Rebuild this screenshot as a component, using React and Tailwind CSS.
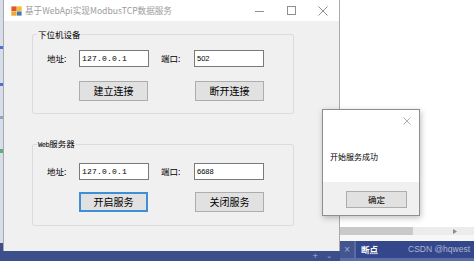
const cjk = "font-['Noto_Sans_CJK_SC','Microsoft_YaHei',sans-serif]"

function FormIcon() {
  return (
    <svg width="11" height="10" viewBox="0 0 11 10">
      <rect x="0" y="0" width="11" height="10" fill="#f3e3c0" />
      <rect x="0.5" y="0.5" width="5" height="4.5" fill="#e0562a" />
      <rect x="6" y="0.5" width="4.5" height="4.5" fill="#f5c02d" />
      <rect x="0.5" y="5.5" width="5" height="4" fill="#f0a830" />
      <rect x="6" y="5.5" width="4.5" height="4" fill="#3b78c8" />
    </svg>
  )
}

function TitleBar() {
  return (
    <div className="h-[21px] bg-white flex items-center shrink-0">
      <div className="pl-[7px] flex items-center">
        <FormIcon />
      </div>
      <span className={`ml-[3px] text-[8.6px] leading-none text-[#9c9c9c] ${cjk}`}>
        基于WebApi实现ModbusTCP数据服务
      </span>
      <div className="ml-auto flex h-full">
        <div className="w-[32px] flex items-center justify-center">
          <svg width="9" height="9" viewBox="0 0 9 9">
            <line x1="0" y1="5.5" x2="9" y2="5.5" stroke="#8f8f8f" strokeWidth="1" />
          </svg>
        </div>
        <div className="w-[32px] flex items-center justify-center">
          <svg width="9" height="9" viewBox="0 0 9 9">
            <rect x="0.5" y="0.5" width="8" height="8" fill="none" stroke="#8f8f8f" strokeWidth="1" />
          </svg>
        </div>
        <div className="w-[32px] flex items-center justify-center">
          <svg width="10" height="10" viewBox="0 0 10 10">
            <path d="M0.5 0.5L9.5 9.5M9.5 0.5L0.5 9.5" stroke="#8f8f8f" strokeWidth="1" />
          </svg>
        </div>
      </div>
    </div>
  )
}

function TextBox({ value, mono }) {
  return (
    <div className="w-[70px] h-[17px] bg-white border border-[#7a7a7a] flex items-center pl-[2px]">
      <span
        className={
          mono
            ? "text-[8px] leading-none text-black font-['Liberation_Mono',monospace] tracking-[0.2px]"
            : "text-[7.5px] leading-none text-black font-['Liberation_Sans',sans-serif]"
        }
      >
        {value}
      </span>
    </div>
  )
}

function WinButton({ children, focused }) {
  return (
    <div
      className={`w-[69px] h-[20px] flex items-center justify-center bg-[#e1e1e1] text-[10px] leading-none text-black ${cjk} ${
        focused ? 'border-2 border-[#3f8fd6]' : 'border border-[#adadad]'
      }`}
    >
      {children}
    </div>
  )
}

function GroupBox({ title, address, port, left, right, focusLeft, top, rowGap, pb, mono }) {
  return (
    <fieldset className={`w-[262px] border border-[#dcdcdc] rounded-[2px] ${pb}`}>
      <legend className={`ml-[4px] px-[1px] text-[8.5px] leading-[10px] text-black ${cjk}`}>{title}</legend>
      <div className={`flex items-center pl-[14px] ${top}`}>
        <span className={`w-[32px] text-[8.5px] leading-none text-black ${cjk}`}>地址:</span>
        <TextBox value={address} mono />
        <span className={`ml-[12px] w-[33px] text-[8.5px] leading-none text-black ${cjk}`}>端口:</span>
        <TextBox value={port} mono={mono} />
      </div>
      <div className={`flex ml-[46px] ${rowGap}`}>
        <WinButton focused={focusLeft}>{left}</WinButton>
        <div className="ml-[47px]">
          <WinButton>{right}</WinButton>
        </div>
      </div>
    </fieldset>
  )
}

function MainWindow() {
  return (
    <div className="w-[337px] h-[251px] bg-[#f0f0f0] border-l border-r border-[#a9a9a9] flex flex-col">
      <TitleBar />
      <div className="flex flex-col pl-[28px] pt-[8px]">
        <GroupBox
          title="下位机设备"
          address="127.0.0.1"
          port="502"
          left="建立连接"
          right="断开连接"
          top="mt-[11px]"
          rowGap="mt-[14px]"
          pb="pb-[12px]"
        />
        <div className="mt-[24px]">
          <GroupBox
            title={
              <span>
                <span className="font-['DejaVu_Sans_Mono',monospace] text-[7px] tracking-[-0.5px]">Web</span>服务器
              </span>
            }
            address="127.0.0.1"
            port="6688"
            left="开启服务"
            right="关闭服务"
            focusLeft
            top="mt-[13px]"
            rowGap="mt-[12px]"
            pb="pb-[13px]"
          />
        </div>
      </div>
    </div>
  )
}

function MessageBox() {
  return (
    <div className="absolute left-[322px] top-[109px] w-[98px] h-[107px] bg-white border border-[#8e8e8e] shadow-[1px_2px_6px_rgba(0,0,0,0.25)] flex flex-col">
      <div className="h-[72px] flex flex-col">
        <div className="flex justify-end pr-[8px] pt-[7px]">
          <svg width="8" height="8" viewBox="0 0 8 8">
            <path d="M0.5 0.5L7.5 7.5M7.5 0.5L0.5 7.5" stroke="#a8a8a8" strokeWidth="0.9" />
          </svg>
        </div>
        <div className={`pl-[7px] mt-[28px] text-[8px] leading-none text-black ${cjk}`}>开始服务成功</div>
      </div>
      <div className="flex-1 bg-[#f0f0f0] pl-[23px] pt-[9px]">
        <div className={`w-[61px] h-[17px] bg-[#e1e1e1] border border-[#adadad] flex items-center justify-center text-[8.5px] leading-none text-black ${cjk}`}>
          确定
        </div>
      </div>
    </div>
  )
}

export default function App() {
  return (
    <div className="w-[474px] h-[261px] overflow-hidden relative bg-white flex">
      <div className="w-[340px] flex flex-col">
        <div className="h-[251px] flex">
          <div className="w-[3px] bg-[#d7dee9] flex flex-col">
            <div className="mt-[46px] h-[3px] bg-[#4f6fd8]" />
            <div className="mt-[34px] h-[3px] bg-[#4f6fd8]" />
            <div className="mt-[30px] h-[3px] bg-[#8fa5c8]" />
            <div className="mt-[30px] h-[4px] bg-[#5fae7a]" />
            <div className="mt-auto h-[8px] bg-[#3d508e]" />
          </div>
          <MainWindow />
        </div>
        <div className="flex-1 bg-[#3c4f8d] flex items-center justify-end pr-[8px] gap-[8px] text-[7px] leading-none text-[#aab4d6] font-['DejaVu_Sans',sans-serif]">
          <span>+</span>
          <span>⌄</span>
        </div>
      </div>
      <div className="flex-1 flex flex-col">
        <div className="h-[227px] bg-white" />
        <div className="h-[8px] bg-[#ececec] flex items-center">
          <div className="w-[73px] h-full bg-[#c9c9c9]" />
          <svg className="ml-auto mr-[17px]" width="4" height="5" viewBox="0 0 4 5">
            <path d="M0 0L4 2.5L0 5Z" fill="#8a8a8a" />
          </svg>
        </div>
        <div className="h-[6px] bg-[#f7f7f7]" />
        <div className="flex-1 flex flex-col">
          <div className="flex-1 flex">
            <div className="w-[14px] bg-[#42558f] flex items-center justify-center text-[8px] leading-none text-[#aab4d6] font-['DejaVu_Sans',sans-serif]">
              ×
            </div>
            <div className="w-[2px] bg-[#5a6ba0]" />
            <div className="flex-1 bg-[#33478a] flex items-center pl-[5px]">
              <span className={`text-[8.5px] leading-none text-white font-bold ${cjk}`}>断点</span>
              <span className="ml-[30px] text-[8.5px] leading-none text-[#aeb7d3] font-['Liberation_Sans',sans-serif]">
                CSDN @hqwest
              </span>
            </div>
          </div>
          <div className="h-[3px] bg-[#5b6ea8]" />
        </div>
      </div>
      <MessageBox />
    </div>
  )
}
